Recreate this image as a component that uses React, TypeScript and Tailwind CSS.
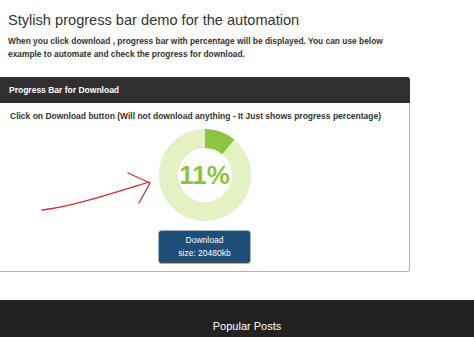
export default function App() {
  const r = 36.5;
  const c = 2 * Math.PI * r;
  const pct = 11;
  return (
    <div className="relative w-[474px] h-[337px] overflow-hidden bg-white text-[#333]" style={{ fontFamily: '"Liberation Sans", Arial, sans-serif' }}>
      <div className="pt-[10px] pl-[8px]">
        <h1 className="text-[14.6px] leading-[20px] font-normal text-[#333]">Stylish progress bar demo for the automation</h1>
        <p className="mt-[5px] text-[8.4px] leading-[13px] font-bold text-[#333] w-[400px]">
          When you click download , progress bar with percentage will be displayed. You can use below example to automate and check the progress for download.
        </p>
      </div>
      <div className="mt-[16px] ml-[-1px] w-[411px]">
        <div className="h-[26px] bg-[#2f2f2f] rounded-tr-[3px] pl-[10px] flex items-center text-white text-[8.5px] font-bold">
          Progress Bar for Download
        </div>
        <div className="border border-t-0 border-[#a9b8c4] rounded-br-[3px] pl-[10px] pt-[7px] pb-[8px] flex flex-col">
          <p className="text-[8.5px] leading-[13px] font-bold text-[#333]">
            Click on Download button (Will not download anything - It Just shows progress percentage)
          </p>
          <div className="self-center mt-[6px] relative w-[92px] h-[92px] ml-[-10px]">
            <svg width="92" height="92" viewBox="0 0 92 92" className="absolute inset-0">
              <circle cx="46" cy="46" r={r} fill="none" stroke="#e4f1c3" strokeWidth="19" />
              <circle
                cx="46"
                cy="46"
                r={r}
                fill="none"
                stroke="#8cc540"
                strokeWidth="19"
                strokeDasharray={`${(c * pct) / 100} ${c}`}
                transform="rotate(-90 46 46)"
              />
            </svg>
            <div className="absolute inset-0 flex items-center justify-center text-[26px] font-bold text-[#8cc43f] pt-[1px]">
              11%
            </div>
          </div>
          <button className="self-center ml-[-10px] mt-[10px] w-[91px] h-[32px] bg-[#1e4d78] border border-[#3b4b5c] rounded-[2px] text-white text-[8.5px] leading-[13px] flex flex-col items-center justify-center outline outline-1 outline-[#9fb0bf]">
            <span>Download</span>
            <span>size: 20480kb</span>
          </button>
        </div>
      </div>
      <div className="mt-[28px] h-[37px] bg-[#222] pl-[20px] pt-[20px] text-center text-white text-[11px] leading-[13px]">
        Popular Posts
      </div>
      <svg className="absolute left-0 top-0 pointer-events-none" width="474" height="337" viewBox="0 0 474 337">
        <path d="M42 210 C 70 207, 110 194, 149 182" fill="none" stroke="#d42a2a" strokeWidth="1.3" strokeLinecap="round" />
        <path d="M128 173 L150 183 L139 203" fill="none" stroke="#d42a2a" strokeWidth="1.3" strokeLinecap="round" strokeLinejoin="round" />
      </svg>
    </div>
  );
}
